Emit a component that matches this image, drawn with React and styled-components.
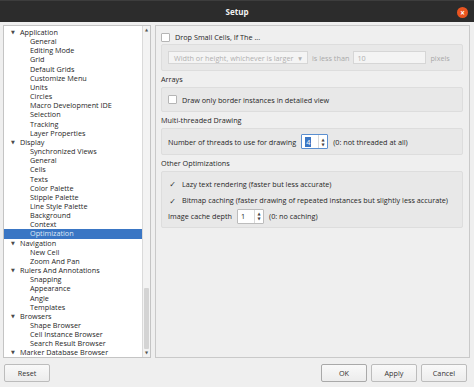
import React from 'react';
import styled, { createGlobalStyle } from 'styled-components';

const GlobalStyle = createGlobalStyle`
  html, body {
    margin: 0;
    padding: 0;
    background: #efefef;
  }
  body {
    font-family: "Open Sans", "DejaVu Sans", sans-serif;
    font-size: 7.25px;
    color: #262626;
  }
`;

const Window = styled.div`
  width: 474px;
  height: 387px;
  display: flex;
  flex-direction: column;
  background: #efefef;
  overflow: hidden;
`;

const TitleBar = styled.div`
  height: 22px;
  flex: none;
  background: #2c2c2c;
  border-top: 1px solid #3d3d3d;
  box-sizing: border-box;
  display: flex;
  align-items: center;
  justify-content: center;
  position: relative;
  color: #f2f2f2;
  font-weight: bold;
  font-size: 8px;
`;

const CloseButton = styled.div`
  position: absolute;
  right: 6px;
  top: 6px;
  width: 11px;
  height: 11px;
  border-radius: 50%;
  background: #e95420;
  color: #fff;
  font-size: 8px;
  line-height: 11px;
  text-align: center;
`;

const Main = styled.div`
  display: flex;
  gap: 4px;
  padding: 3px 4px 0 3px;
  height: 333px;
  flex: none;
`;

const TreePanel = styled.div`
  width: 148px;
  box-sizing: border-box;
  background: #ffffff;
  border: 1px solid #c4c4c4;
  display: flex;
  overflow: hidden;
`;

const TreeList = styled.div`
  flex: 1;
  padding-top: 2px;
`;

const TreeRow = styled.div`
  height: 9.17px;
  line-height: 9.17px;
  white-space: nowrap;
  padding-left: ${p => (p.$child ? 26 : 7)}px;
  background: ${p => (p.$selected ? '#3a76c4' : 'transparent')};
  color: ${p => (p.$selected ? '#dfe9f6' : '#262626')};
  display: flex;
  align-items: center;
`;

const Arrow = styled.span`
  width: 9px;
  font-size: 5px;
  color: #4a4a4a;
`;

const ScrollBar = styled.div`
  width: 7px;
  flex: none;
  border-left: 1px solid #dadada;
  background: #f3f3f3;
  display: flex;
  flex-direction: column;
  align-items: center;
`;

const ScrollArrow = styled.div`
  height: 8px;
  font-size: 4px;
  color: #555;
  line-height: 8px;
`;

const ScrollTrack = styled.div`
  flex: 1;
  width: 100%;
  display: flex;
  flex-direction: column;
  justify-content: flex-end;
`;

const ScrollThumb = styled.div`
  height: 61px;
  margin: 0 1px;
  background: #d4d4d4;
  border-radius: 1px;
`;

const Page = styled.div`
  flex: 1;
  box-sizing: border-box;
  border: 1px solid #c9c9c9;
  background: #efefef;
  padding: 5px 6px 0 5px;
  display: flex;
  flex-direction: column;
`;

const CheckRow = styled.label`
  display: flex;
  align-items: center;
  gap: 5px;
  height: ${p => p.$h || 14}px;
`;

const Box = styled.span`
  width: 7px;
  height: 7px;
  border: 1px solid #b5b5b5;
  background: #fff;
  border-radius: 1px;
  flex: none;
`;

const Tick = styled.span`
  width: 9px;
  flex: none;
  font-size: 8px;
  color: #333;
  text-align: center;
`;

const SectionLabel = styled.div`
  height: 16px;
  line-height: 16px;
`;

const Group = styled.div`
  border: 1px solid #dddddd;
  background: #e8e8e8;
  border-radius: 2px;
  padding: ${p => p.$pad || '0 6px'};
  display: flex;
  flex-direction: column;
  justify-content: center;
  height: ${p => p.$h}px;
  box-sizing: border-box;
  margin-top: ${p => p.$mt || 0}px;
`;

const Line = styled.div`
  display: flex;
  align-items: center;
  gap: 4px;
  height: ${p => p.$h || 16}px;
  color: ${p => (p.$disabled ? '#a8a8a8' : '#262626')};
`;

const Combo = styled.div`
  width: 140px;
  height: 13px;
  box-sizing: border-box;
  border: 1px solid #d6d6d6;
  background: #f4f4f4;
  padding: 0 5px;
  display: flex;
  align-items: center;
  justify-content: space-between;
  color: #b0b0b0;
`;

const Field = styled.div`
  width: 73px;
  height: 13px;
  box-sizing: border-box;
  border: 1px solid #d6d6d6;
  background: #f4f4f4;
  padding: 0 3px;
  display: flex;
  align-items: center;
  color: #b0b0b0;
`;

const Spin = styled.div`
  width: ${p => p.$w}px;
  height: 15px;
  box-sizing: border-box;
  border: 1px solid ${p => (p.$focus ? '#5b8fd0' : '#bcbcbc')};
  background: #fff;
  border-radius: 1px;
  display: flex;
  align-items: center;
  padding-left: 3px;
  margin: 0 1px;
`;

const SpinValue = styled.span`
  flex: 1;
  display: flex;
`;

const Selected = styled.span`
  background: #3a76c4;
  color: #fff;
  padding: 0 1px;
  line-height: 10px;
`;

const SpinArrows = styled.div`
  width: 8px;
  height: 100%;
  border-left: 1px solid #d8d8d8;
  display: flex;
  flex-direction: column;
  align-items: center;
  justify-content: center;
  font-size: 4px;
  line-height: 5px;
  color: #444;
`;

const Footer = styled.div`
  display: flex;
  align-items: center;
  padding: 6px 7px 0 4px;
  gap: 4px;
`;

const Spacer = styled.div`
  flex: 1;
`;

const Button = styled.button`
  width: 46px;
  height: 18px;
  font-family: inherit;
  font-size: 7.25px;
  color: #333;
  border: 1px solid ${p => (p.$default ? '#a9a9a9' : '#bcbcbc')};
  border-radius: 2px;
  background: linear-gradient(#f9f9f9, #ececec);
  padding: 0;
`;

const tree = [
  ['Application', [
    'General', 'Editing Mode', 'Grid', 'Default Grids', 'Customize Menu', 'Units',
    'Circles', 'Macro Development IDE', 'Selection', 'Tracking', 'Layer Properties',
  ]],
  ['Display', [
    'Synchronized Views', 'General', 'Cells', 'Texts', 'Color Palette', 'Stipple Palette',
    'Line Style Palette', 'Background', 'Context', 'Optimization',
  ]],
  ['Navigation', ['New Cell', 'Zoom And Pan']],
  ['Rulers And Annotations', ['Snapping', 'Appearance', 'Angle', 'Templates']],
  ['Browsers', ['Shape Browser', 'Cell Instance Browser', 'Search Result Browser']],
  ['Marker Database Browser', []],
];

export default function App() {
  return (
    <Window>
      <GlobalStyle />
      <TitleBar>
        Setup
        <CloseButton>×</CloseButton>
      </TitleBar>
      <Main>
        <TreePanel>
          <TreeList>
            {tree.map(([head, kids]) => (
              <React.Fragment key={head}>
                <TreeRow>
                  <Arrow>▼</Arrow>
                  {head}
                </TreeRow>
                {kids.map(k => (
                  <TreeRow key={head + k} $child $selected={k === 'Optimization'}>
                    {k}
                  </TreeRow>
                ))}
              </React.Fragment>
            ))}
          </TreeList>
          <ScrollBar>
            <ScrollArrow>▲</ScrollArrow>
            <ScrollTrack>
              <ScrollThumb />
            </ScrollTrack>
            <ScrollArrow>▼</ScrollArrow>
          </ScrollBar>
        </TreePanel>
        <Page>
          <CheckRow $h={12}>
            <Box />
            Drop Small Cells, If The ...
          </CheckRow>
          <Group $h={27} $mt={1}>
            <Line $disabled>
              <Combo>
                Width or height, whichever is larger
                <span>▾</span>
              </Combo>
              is less than
              <Field>10</Field>
              pixels
            </Line>
          </Group>
          <SectionLabel>Arrays</SectionLabel>
          <Group $h={25}>
            <CheckRow>
              <Box />
              Draw only border instances in detailed view
            </CheckRow>
          </Group>
          <SectionLabel>Multi-threaded Drawing</SectionLabel>
          <Group $h={27}>
            <Line>
              Number of threads to use for drawing
              <Spin $w={27} $focus>
                <SpinValue><Selected>4</Selected></SpinValue>
                <SpinArrows><span>▲</span><span>▼</span></SpinArrows>
              </Spin>
              (0: not threaded at all)
            </Line>
          </Group>
          <SectionLabel>Other Optimizations</SectionLabel>
          <Group $h={57} $pad="2px 6px">
            <CheckRow $h={17}>
              <Tick>✓</Tick>
              Lazy text rendering (faster but less accurate)
            </CheckRow>
            <CheckRow $h={16}>
              <Tick>✓</Tick>
              Bitmap caching (faster drawing of repeated instances but slightly less accurate)
            </CheckRow>
            <Line $h={16}>
              Image cache depth
              <Spin $w={27}>
                <SpinValue>1</SpinValue>
                <SpinArrows><span>▲</span><span>▼</span></SpinArrows>
              </Spin>
              (0: no caching)
            </Line>
          </Group>
        </Page>
      </Main>
      <Footer>
        <Button>Reset</Button>
        <Spacer />
        <Button $default>OK</Button>
        <Button>Apply</Button>
        <Button>Cancel</Button>
      </Footer>
    </Window>
  );
}
